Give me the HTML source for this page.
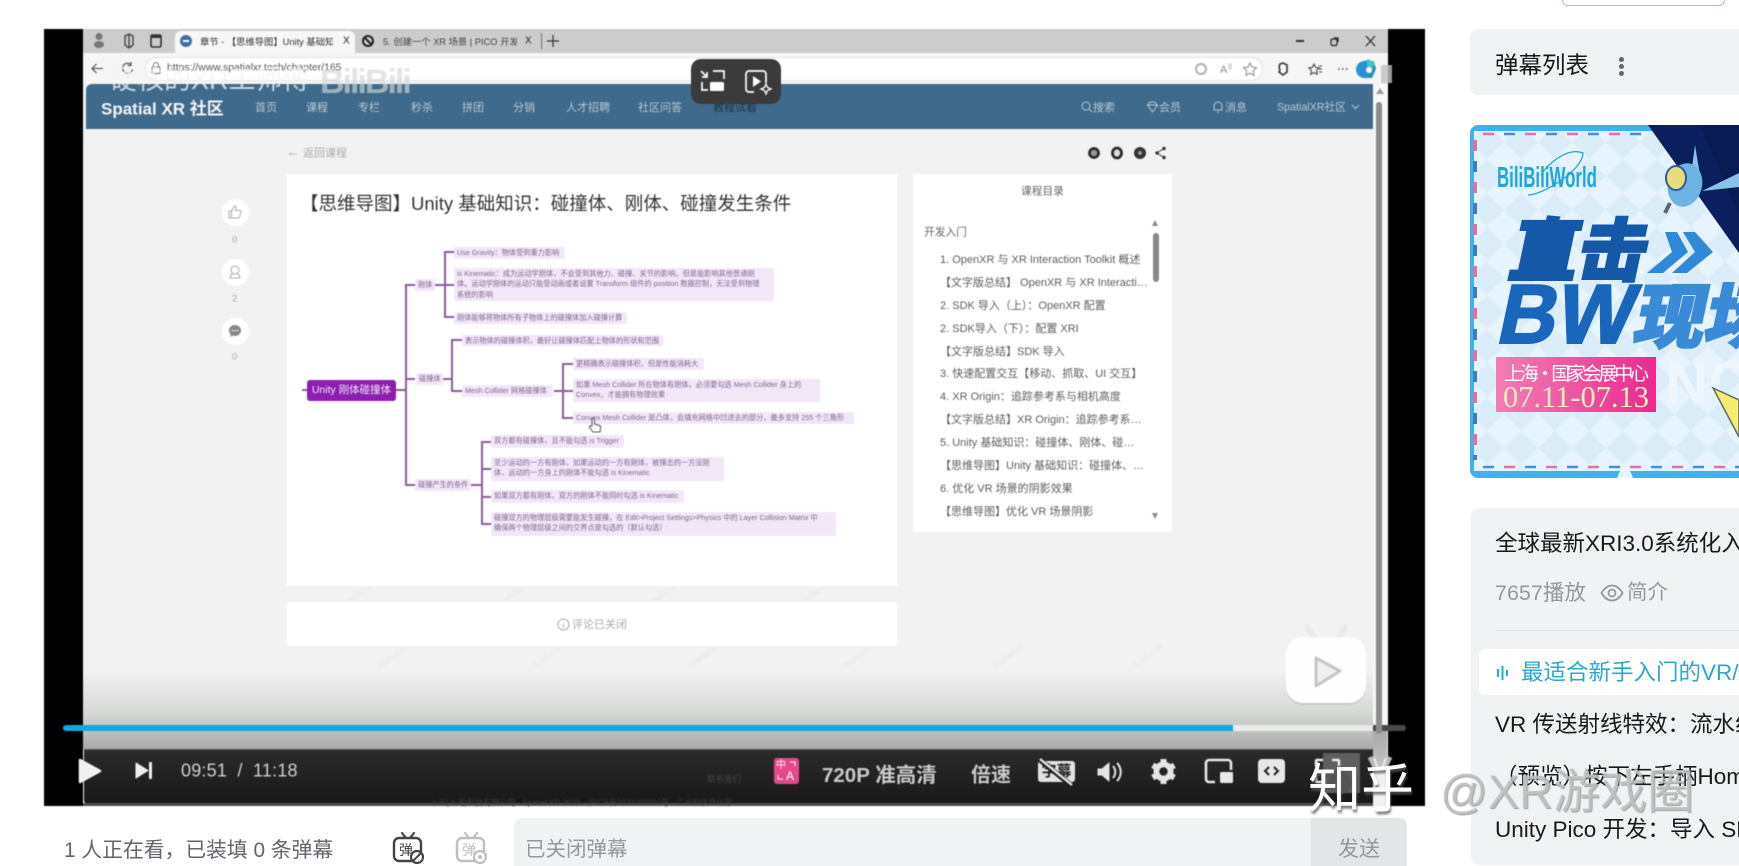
<!DOCTYPE html>
<html lang="zh">
<head>
<meta charset="utf-8">
<title>Spatial XR</title>
<style>
*{box-sizing:border-box}
html,body{margin:0;padding:0;background:#fff;overflow:hidden}
body{width:1739px;height:866px;position:relative;overflow:hidden;font-family:"Liberation Sans","Noto Sans CJK SC",sans-serif}
.a{position:absolute;white-space:nowrap}
.c{transform:translateY(-50%)}
#blur{position:absolute;left:0;top:0;width:1739px;height:866px;overflow:hidden;filter:blur(.45px)}
.nav{color:#b9c8d3;font-size:11px;top:107px;transform:translateY(-50%)}
.n{position:absolute;background:#f1e7f7;color:#84648f;font-size:7.2px;line-height:10.4px;padding:1px 3px;border-radius:2px;white-space:nowrap}
.l{position:absolute;background:#8d5c99}
.toc{position:absolute;left:940px;width:208px;color:#5d5d5d;font-size:11px;line-height:14px;white-space:nowrap;overflow:hidden;text-overflow:ellipsis;transform:translateY(-50%)}
.ri{position:absolute;color:#18191c;font-size:22.5px;line-height:32px;white-space:nowrap;overflow:hidden;transform:translateY(-50%)}
.wm{position:absolute;color:#e8e9e8;font-size:8px;transform:rotate(-35deg);white-space:nowrap}
</style>
</head>
<body>
<div id="blur">
<!-- player -->
<div class="a" style="left:44px;top:29px;width:1381px;height:777px;background:#000"></div>
<div class="a" style="left:83px;top:29px;width:1305px;height:777px;background:#f1f2f1"></div>

<!-- tab bar -->
<div class="a" style="left:83px;top:29px;width:1305px;height:24px;background:#cbcccb"></div>
<div class="a" style="left:175px;top:31px;width:180px;height:24px;background:#f6f7f6;border-radius:6px 6px 0 0"></div>
<svg class="a" style="left:90px;top:31px" width="80" height="20" viewBox="0 0 80 20">
<circle cx="9" cy="5.5" r="3.5" fill="#777"/><ellipse cx="9" cy="13.5" rx="5" ry="3.5" fill="#777"/>
<path d="M35 5l4-2 4 2v9l-4 3-4-3z M39 3v14" fill="none" stroke="#444" stroke-width="1.4"/>
<rect x="61" y="4" width="10" height="12" rx="1.5" fill="none" stroke="#333" stroke-width="1.6"/><rect x="61" y="4" width="10" height="3" fill="#333"/>
</svg>
<div class="a" style="left:180px;top:35px;width:12px;height:12px;border-radius:50%;background:#3d6fa8"></div>
<div class="a" style="left:183px;top:40px;width:6px;height:1.5px;background:#fff"></div>
<div class="a c" style="left:200px;top:41px;font-size:9.3px;color:#333;width:133px;overflow:hidden">章节 - 【思维导图】Unity 基础知识</div>
<div class="a c" style="left:343px;top:41px;font-size:10px;color:#222">X</div>
<svg class="a" style="left:361px;top:34px" width="14" height="14" viewBox="0 0 14 14"><circle cx="7" cy="7" r="5" fill="none" stroke="#222" stroke-width="2"/><path d="M3.5 3.5l7 7" stroke="#222" stroke-width="2"/></svg>
<div class="a c" style="left:383px;top:41px;font-size:9.3px;color:#444;width:134px;overflow:hidden">5. 创建一个 XR 场景 | PICO 开发者</div>
<div class="a c" style="left:525px;top:41px;font-size:10px;color:#222">X</div>
<div class="a" style="left:541px;top:33px;width:1px;height:16px;background:#777"></div>
<svg class="a" style="left:547px;top:35px" width="12" height="12"><path d="M6 0v12M0 6h12" stroke="#333" stroke-width="1.2"/></svg>
<div class="a" style="left:1296px;top:40px;width:8px;height:1.6px;background:#333"></div>
<svg class="a" style="left:1329px;top:35px" width="12" height="12" viewBox="0 0 12 12"><rect x="2" y="4" width="6" height="6.5" rx="1.5" fill="none" stroke="#222" stroke-width="1.2"/><path d="M5 3h4v4" fill="none" stroke="#222" stroke-width="1.2"/></svg>
<svg class="a" style="left:1365px;top:35px" width="11" height="12"><path d="M1 1l9 10M10 1L1 11" stroke="#222" stroke-width="1.1"/></svg>

<!-- address row -->
<div class="a" style="left:83px;top:53px;width:1305px;height:31px;background:#f5f6f5"></div>
<div class="a" style="left:145px;top:57px;width:1118px;height:24px;background:#fff;border:1px solid #e2e3e2;border-radius:12px"></div>
<svg class="a" style="left:90px;top:61px" width="50" height="15" viewBox="0 0 50 15">
<path d="M13 7.5H2M6.5 3L2 7.5 6.5 12" fill="none" stroke="#444" stroke-width="1.1"/>
<path d="M41 3.500a5 5 0 1 0 1.500 5M41 1v3.500h-3.500" fill="none" stroke="#555" stroke-width="1.2"/>
</svg>
<svg class="a" style="left:150px;top:61px" width="12" height="14" viewBox="0 0 12 14"><rect x="2" y="6" width="8" height="6.5" rx="1" fill="none" stroke="#777"/><path d="M3.500 6V4a2.500 2.500 0 0 1 5 0v2" fill="none" stroke="#777"/></svg>
<div class="a c" style="left:167px;top:68px;font-size:10.4px;color:#555">https://www.spatialxr.tech/chapter/165</div>
<svg class="a" style="left:1192px;top:56px" width="192" height="26" viewBox="0 0 192 26">
<circle cx="9" cy="13" r="5" fill="none" stroke="#b5b5b5" stroke-width="2.200"/>
<text x="28" y="17" font-size="11" fill="#888" font-family="Liberation Sans">A</text><text x="36" y="12" font-size="6" fill="#888" font-family="Liberation Sans">))</text>
<path d="M58 7l2 4 4.500.6-3.200 3.200.8 4.600-4.100-2.200-4.100 2.200.8-4.600-3.200-3.200 4.500-.6z" fill="none" stroke="#888"/>
<path d="M91 7l4 2v7l-4 3-4-3 1-2-1-3 1-3z" fill="none" stroke="#333" stroke-width="1.600"/>
<path d="M122 8l1.600 3.400 3.600.5-2.600 2.600.6 3.800-3.200-1.800-3.200 1.800.6-3.800-2.600-2.600 3.600-.5z M127 10h3M127 13h3M127 16h3" fill="none" stroke="#444" stroke-width="1.100"/>
<path d="M146 13h1.600M150 13h1.600M154 13h1.600" stroke="#555" stroke-width="1.400"/>
<path d="M172 5a9 9 0 0 1 12 8l-4 9h-7a8 8 0 0 1-1-17z" fill="#2b8fd6"/><path d="M175 3l8 3-3 7-5-2z" fill="#3fc6c4"/><circle cx="177" cy="14" r="3" fill="#fff"/>
</svg>
<div class="a" style="left:1381px;top:65px;width:11px;height:18px;background:#bfc0bf;opacity:.8"></div>

<!-- site header -->
<div class="a" style="left:86px;top:84px;width:1287px;height:45px;background:#3f6a8b;border-radius:6px 0 0 0"></div>
<div class="a" style="left:110px;top:64px;font-size:27px;line-height:32px;color:#f4f6f6;opacity:.78">硬核的XR工师傅</div>
<div class="a" style="left:320px;top:63px;font-size:34px;line-height:38px;font-weight:bold;color:#d3d7d8;opacity:.65;letter-spacing:-2px">BiliBili</div>
<div class="a c" style="left:101px;top:107px;font-size:17px;font-weight:bold;color:#f2f5f6">Spatial XR 社区</div>
<div class="a nav" style="left:255px">首页</div>
<div class="a nav" style="left:306px">课程</div>
<div class="a nav" style="left:358px">专栏</div>
<div class="a nav" style="left:411px">秒杀</div>
<div class="a nav" style="left:462px">拼团</div>
<div class="a nav" style="left:513px">分销</div>
<div class="a nav" style="left:566px">人才招聘</div>
<div class="a nav" style="left:638px">社区问答</div>
<div class="a nav" style="left:713px;color:#1f3442">教程试看</div>
<svg class="a" style="left:1080px;top:100px" width="14" height="14"><circle cx="6" cy="6" r="4" fill="none" stroke="#b9c8d3"/><path d="M9 9l3 3" stroke="#b9c8d3"/></svg>
<div class="a nav" style="left:1093px">搜索</div>
<svg class="a" style="left:1146px;top:100px" width="13" height="14"><path d="M1.500 5l3-3h4l3 3-5 7z M1.500 5h10" fill="none" stroke="#b9c8d3"/></svg>
<div class="a nav" style="left:1159px">会员</div>
<svg class="a" style="left:1212px;top:100px" width="12" height="14"><path d="M2 10V6a4 4 0 0 1 8 0v4zM5 12h2" fill="none" stroke="#b9c8d3"/></svg>
<div class="a nav" style="left:1225px">消息</div>
<div class="a nav" style="left:1277px;font-size:10.7px">SpatialXR社区</div>
<svg class="a" style="left:1351px;top:104px" width="9" height="6"><path d="M1 1l3.500 3.500L8 1" fill="none" stroke="#b9c8d3"/></svg>

<!-- overlay pill -->
<div class="a" style="left:691px;top:59px;width:90px;height:45px;background:#3a3a3a;border-radius:10px"></div>
<svg class="a" style="left:691px;top:59px" width="90" height="45" viewBox="0 0 90 45">
<path d="M10 12l6 6M16 13v5h-5M22 12h11v8M11 23v8h6" fill="none" stroke="#fff" stroke-width="1.700"/>
<rect x="19" y="23" width="14" height="9" rx="1.500" fill="#fff"/>
<path d="M63 33h-5a3 3 0 0 1-3-3V15a3 3 0 0 1 3-3h14a3 3 0 0 1 3 3v9" fill="none" stroke="#fff" stroke-width="1.700"/>
<path d="M62 17l8 5.500-8 5.500z" fill="#fff"/>
<path d="M75 25l1.500 3.500L80 30l-3.500 1.500L75 35l-1.500-3.500L70 30l3.500-1.500z" fill="none" stroke="#fff" stroke-width="1.300"/>
</svg>

<!-- page scrollbar -->
<div class="a" style="left:1373px;top:84px;width:15px;height:647px;background:#f7f8f7"></div>
<div class="a" style="left:1376px;top:88px;width:0;height:0;border-left:4px solid transparent;border-right:4px solid transparent;border-bottom:6px solid #999"></div>
<div class="a" style="left:1376px;top:102px;width:6px;height:630px;background:#8c8d8c;border-radius:3px"></div>

<!-- back + share -->
<div class="a c" style="left:286px;top:152px;font-size:11px;color:#aaa"><span style="font-size:14px">←</span> 返回课程</div>
<svg class="a" style="left:1085px;top:145px" width="85" height="16" viewBox="0 0 85 16">
<circle cx="9" cy="8" r="4.500" fill="#999" stroke="#2b2b2b" stroke-width="2.800"/>
<ellipse cx="32" cy="8" rx="4.500" ry="5" fill="#ddd" stroke="#2b2b2b" stroke-width="2.800"/>
<circle cx="55" cy="8" r="6" fill="#333"/><circle cx="55" cy="8" r="2" fill="#999"/>
<circle cx="72" cy="8" r="1.700" fill="#333"/><circle cx="79" cy="3.500" r="1.700" fill="#333"/><circle cx="79" cy="12.500" r="1.700" fill="#333"/><path d="M72 8l7-4.500M72 8l7 4.500" stroke="#333"/>
</svg>

<!-- faint watermarks -->
<div class="wm" style="left:340px;top:590px">SpatialXR</div>
<div class="wm" style="left:495px;top:590px">SpatialXR</div>
<div class="wm" style="left:645px;top:590px">SpatialXR</div>
<div class="wm" style="left:795px;top:590px">SpatialXR</div>
<div class="wm" style="left:375px;top:652px">SpatialXR</div>
<div class="wm" style="left:530px;top:652px">SpatialXR</div>
<div class="wm" style="left:685px;top:652px">SpatialXR</div>
<div class="wm" style="left:840px;top:652px">SpatialXR</div>
<div class="wm" style="left:990px;top:652px">SpatialXR</div>
<div class="wm" style="left:1130px;top:652px">SpatialXR</div>

<!-- left action rail -->
<div class="a" style="left:221.500px;top:198.500px;width:27px;height:27px;border-radius:50%;background:#fff"></div>
<svg class="a" style="left:228px;top:205px" width="14" height="14" viewBox="0 0 14 14"><path d="M1 6h2.500v7H1zM3.500 6l3-5c1.500 0 2 1 1.500 2.200L7.500 5.500H12c1 0 1.300.8 1 1.600l-1.500 5c-.2.6-.7.9-1.300.9H3.500" fill="none" stroke="#aaa"/></svg>
<div class="a c" style="left:232px;top:240px;font-size:9.500px;color:#aaa">0</div>
<div class="a" style="left:221.500px;top:258.500px;width:27px;height:27px;border-radius:50%;background:#fff"></div>
<svg class="a" style="left:228px;top:265px" width="14" height="14" viewBox="0 0 14 14"><circle cx="7" cy="5" r="4" fill="none" stroke="#aaa"/><path d="M2 13c0-3 2-4 3-4.500M12 13c0-3-2-4-3-4.500M2 13h10" fill="none" stroke="#aaa"/></svg>
<div class="a c" style="left:232px;top:299px;font-size:9.500px;color:#aaa">2</div>
<div class="a" style="left:221.500px;top:317.500px;width:27px;height:27px;border-radius:50%;background:#fff"></div>
<svg class="a" style="left:228px;top:324px" width="14" height="14" viewBox="0 0 14 14"><ellipse cx="7" cy="6.500" rx="6" ry="5.500" fill="#888"/><path d="M3 10l-1 3 4-2z" fill="#888"/><circle cx="4.500" cy="6.500" r=".8" fill="#fff"/><circle cx="7" cy="6.500" r=".8" fill="#fff"/><circle cx="9.500" cy="6.500" r=".8" fill="#fff"/></svg>
<div class="a c" style="left:232px;top:357px;font-size:9.500px;color:#aaa">0</div>

<!-- content card -->
<div class="a" style="left:287px;top:174px;width:610px;height:412px;background:#fff"></div>
<div class="a c" style="left:300px;top:203px;font-size:18.500px;color:#333">【思维导图】Unity 基础知识：碰撞体、刚体、碰撞发生条件</div>

<!-- mind map lines -->
<div class="l" style="left:302px;top:389px;width:6px;height:2px"></div>
<div class="l" style="left:396px;top:389px;width:10px;height:2px"></div>
<div class="l" style="left:405px;top:285px;width:2px;height:200px"></div>
<div class="l" style="left:405px;top:284px;width:10px;height:2px"></div>
<div class="l" style="left:406px;top:378px;width:9px;height:2px"></div>
<div class="l" style="left:405px;top:484px;width:10px;height:2px"></div>
<div class="l" style="left:435px;top:284px;width:10px;height:2px"></div>
<div class="l" style="left:444px;top:252px;width:2px;height:65px"></div>
<div class="l" style="left:444px;top:251px;width:10px;height:2px"></div>
<div class="l" style="left:445px;top:284px;width:9px;height:2px"></div>
<div class="l" style="left:444px;top:316px;width:10px;height:2px"></div>
<div class="l" style="left:443px;top:378px;width:9px;height:2px"></div>
<div class="l" style="left:451px;top:340px;width:2px;height:51px"></div>
<div class="l" style="left:451px;top:339px;width:11px;height:2px"></div>
<div class="l" style="left:451px;top:390px;width:11px;height:2px"></div>
<div class="l" style="left:554px;top:390px;width:9px;height:2px"></div>
<div class="l" style="left:562px;top:364px;width:2px;height:53px"></div>
<div class="l" style="left:562px;top:363px;width:11px;height:2px"></div>
<div class="l" style="left:563px;top:390px;width:10px;height:2px"></div>
<div class="l" style="left:562px;top:417px;width:11px;height:2px"></div>
<div class="l" style="left:471px;top:484px;width:10px;height:2px"></div>
<div class="l" style="left:481px;top:442px;width:2px;height:82px"></div>
<div class="l" style="left:481px;top:441px;width:10px;height:2px"></div>
<div class="l" style="left:482px;top:468px;width:9px;height:2px"></div>
<div class="l" style="left:482px;top:496px;width:9px;height:2px"></div>
<div class="l" style="left:481px;top:523px;width:10px;height:2px"></div>

<!-- mind map nodes -->
<div class="a" style="left:307px;top:380px;width:89px;height:21px;background:#8c1fb0;border-radius:3px;color:#f4e6f8;font-size:10.500px;line-height:21px;text-align:center">Unity 刚体碰撞体</div>
<div class="n" style="left:415px;top:279px;width:20px;height:12px;padding:1px 3px">刚体</div>
<div class="n" style="left:416px;top:373px;width:27px;height:12px;padding:1px 3px">碰撞体</div>
<div class="n" style="left:415px;top:479px;width:56px;height:12px;padding:1px 3px">碰撞产生的条件</div>
<div class="n" style="left:454px;top:247px;width:111px;height:12px">Use Gravity：物体受到重力影响</div>
<div class="n" style="left:454px;top:268px;width:320px;height:33px">is Kinematic：成为运动学刚体，不会受到其他力、碰撞、关节的影响，但是能影响其他普通刚<br>体。运动学刚体的运动只能受动画或者设置 Transform 组件的 position 数据控制，无法受到物理<br>系统的影响</div>
<div class="n" style="left:454px;top:312px;width:173px;height:12px">刚体能够将物体所有子物体上的碰撞体加入碰撞计算</div>
<div class="n" style="left:462px;top:335px;width:201px;height:11px;line-height:9px">表示物体的碰撞体积，最好让碰撞体匹配上物体的形状和范围</div>
<div class="n" style="left:462px;top:385px;width:91px;height:12px">Mesh Collider 网格碰撞体</div>
<div class="n" style="left:573px;top:358px;width:131px;height:12px">更精确表示碰撞体积，但是性能消耗大</div>
<div class="n" style="left:573px;top:379px;width:247px;height:23px">如果 Mesh Collider 所在物体有刚体，必须要勾选 Mesh Collider 身上的<br>Convex，才能拥有物理效果</div>
<div class="n" style="left:573px;top:412px;width:281px;height:12px">Convex Mesh Collider 是凸体，会填充网格中凹进去的部分，最多支持 255 个三角形</div>
<div class="n" style="left:491px;top:435px;width:133px;height:13px">双方都有碰撞体，且不能勾选 is Trigger</div>
<div class="n" style="left:491px;top:457px;width:233px;height:24px">至少运动的一方有刚体，如果运动的一方有刚体，被撞击的一方没刚<br>体，运动的一方身上的刚体不能勾选 is Kinematic</div>
<div class="n" style="left:491px;top:490px;width:193px;height:13px">如果双方都有刚体，双方的刚体不能同时勾选 is Kinematic</div>
<div class="n" style="left:491px;top:512px;width:345px;height:24px">碰撞双方的物理层级需要能发生碰撞，在 Edit&gt;Project Settings&gt;Physics 中的 Layer Collision Matrix 中<br>确保两个物理层级之间的交界点是勾选的（默认勾选）</div>
<!-- cursor -->
<svg class="a" style="left:588px;top:417px" width="14" height="18" viewBox="0 0 14 18"><path d="M4 9V2.500a1.200 1.200 0 0 1 2.400 0V7l5 1.500c1 .3 1.500 1 1.300 2L12 15H5L1.500 10.500c-.8-1 .8-2.300 1.600-1.300z" fill="#fff" stroke="#555"/></svg>

<!-- comments closed -->
<div class="a" style="left:287px;top:602px;width:610px;height:44px;background:#fff"></div>
<svg class="a" style="left:557px;top:618px" width="13" height="13"><circle cx="6.500" cy="6.500" r="5.500" fill="none" stroke="#aaa"/><path d="M6.500 3.500v1M6.500 6v4" stroke="#aaa"/></svg>
<div class="a c" style="left:572px;top:624px;font-size:11px;color:#aaa">评论已关闭</div>

<!-- TOC -->
<div class="a" style="left:913px;top:174px;width:259px;height:358px;background:#fff"></div>
<div class="a c" style="left:1021px;top:191px;font-size:10.700px;color:#666">课程目录</div>
<div class="a c" style="left:924px;top:232px;font-size:10.700px;color:#666">开发入门</div>
<div class="toc" style="top:260px">1. OpenXR 与 XR Interaction Toolkit 概述</div>
<div class="toc" style="top:283px">【文字版总结】 OpenXR 与 XR Interaction Toolkit</div>
<div class="toc" style="top:306px">2. SDK 导入（上）：OpenXR 配置</div>
<div class="toc" style="top:329px">2. SDK导入（下）：配置 XRI</div>
<div class="toc" style="top:352px">【文字版总结】SDK 导入</div>
<div class="toc" style="top:374px">3. 快速配置交互【移动、抓取、UI 交互】</div>
<div class="toc" style="top:397px">4. XR Origin：追踪参考系与相机高度</div>
<div class="toc" style="top:420px">【文字版总结】XR Origin：追踪参考系与相机高度</div>
<div class="toc" style="top:443px;width:201px">5. Unity 基础知识：碰撞体、刚体、碰撞发生条件</div>
<div class="toc" style="top:466px">【思维导图】Unity 基础知识：碰撞体、刚体、碰撞</div>
<div class="toc" style="top:489px">6. 优化 VR 场景的阴影效果</div>
<div class="toc" style="top:512px">【思维导图】优化 VR 场景阴影</div>
<div class="a" style="left:1152px;top:220px;width:0;height:0;border-left:3.500px solid transparent;border-right:3.500px solid transparent;border-bottom:6px solid #888"></div>
<div class="a" style="left:1153px;top:233px;width:5.500px;height:49px;background:#888;border-radius:3px"></div>
<div class="a" style="left:1152px;top:513px;width:0;height:0;border-left:3.500px solid transparent;border-right:3.500px solid transparent;border-top:6px solid #888"></div>

<!-- bottom gradient -->
<div class="a" style="left:83px;top:670px;width:1290px;height:79px;background:linear-gradient(to bottom,rgba(170,172,170,0),rgba(205,207,205,.75) 55%,#a8a9a8)"></div>
<!-- dark footer bar -->
<div class="a" style="left:84px;top:749px;width:1289px;height:55px;background:linear-gradient(#2b2b2b,#181818);border-top:1px solid #555;border-radius:0 0 0 4px"></div>
<div class="a" style="left:83px;top:803px;width:1290px;height:3px;background:#4c4c4c"></div>
<div class="a c" style="left:707px;top:779px;font-size:8.500px;color:#444">联系我们</div>
<div class="a c" style="left:430px;top:803px;font-size:8px;color:#3e3e3e">上元(上海)科技有限公司 · Spatial XR 2023 · 沪ICP备2023000000号 · 工业和信息化部</div>
<div class="a" style="left:1373px;top:731px;width:14px;height:40px;background:linear-gradient(#a8a9a8,#c4c5c4)"></div>

<!-- tv logo -->
<svg class="a" style="left:1283px;top:623px;overflow:visible" width="86" height="84" viewBox="-2 -2 86 84">
<path d="M22 2l9 13M60 2L51 15" stroke="#e9eae9" stroke-width="6" stroke-linecap="round"/>
<rect x="1" y="12" width="80" height="66" rx="17" fill="#b8b9b8" opacity=".55" transform="translate(0 2)"/>
<rect x="1" y="12" width="80" height="66" rx="17" fill="#fefefe"/>
<path d="M31 33l24 13-24 15z" fill="#f0f0f0" stroke="#c4c5c4" stroke-width="3" stroke-linejoin="round"/>
</svg>

<!-- progress -->
<div class="a" style="left:1233px;top:725px;width:140px;height:6px;background:rgba(240,242,240,.85)"></div>
<div class="a" style="left:1373px;top:725px;width:33px;height:6px;background:#4a4a4a;border-radius:0 3px 3px 0"></div>
<div class="a" style="left:63px;top:725px;width:1170px;height:6px;background:#11a8e2;border-radius:3px 0 0 3px"></div>
<div class="a" style="left:1376px;top:700px;width:6px;height:34px;background:#8c8d8c;border-radius:3px"></div>

<!-- controls -->
<svg class="a" style="left:78px;top:757px" width="24" height="28" viewBox="0 0 24 28"><path d="M2 3l20 11L2 25z" fill="#f1f1f1" stroke="#f1f1f1" stroke-width="2.500" stroke-linejoin="round"/></svg>
<svg class="a" style="left:134px;top:761px" width="20" height="19" viewBox="0 0 20 19"><path d="M2 2l12 7.500L2 17z" fill="#eee" stroke="#eee" stroke-linejoin="round"/><rect x="15" y="1" width="3" height="17" rx="1" fill="#eee"/></svg>
<div class="a c" style="left:181px;top:771px;font-size:18px;color:#cfcfcf;letter-spacing:.2px">09:51&nbsp;&nbsp;/&nbsp;&nbsp;11:18</div>
<div class="a" style="left:774px;top:758px;width:25px;height:26px;background:#e6488c;border-radius:3px"></div>
<div class="a" style="left:776px;top:760px;font-size:10px;line-height:11px;color:#fff">中</div>
<div class="a" style="left:786px;top:770px;font-size:12px;line-height:13px;color:#fff">A</div>
<svg class="a" style="left:774px;top:758px" width="25" height="26"><path d="M16 4h5v4M4 17v4h5" fill="none" stroke="#fff"/></svg>
<div class="a c" style="left:822px;top:773px;font-size:20.500px;font-weight:bold;color:#c9c9c9">720P 准高清</div>
<div class="a c" style="left:971px;top:773px;font-size:20px;font-weight:bold;color:#c9c9c9">倍速</div>
<div class="a" style="left:1038px;top:761px;width:37px;height:21px;background:#e2e2e2;border-radius:3px;color:#222;font-size:15px;line-height:21px;text-align:center;font-weight:bold">字幕</div>
<svg class="a" style="left:1036px;top:756px" width="42" height="32"><path d="M4 4l32 26" stroke="#1e1e1e" stroke-width="5"/><path d="M4 3l32 26" stroke="#e8e8e8" stroke-width="2.400"/></svg>
<svg class="a" style="left:1096px;top:760px" width="28" height="24" viewBox="0 0 28 24"><path d="M2 9h4l7-6v18l-7-6H2z" fill="#e4e4e4" stroke="#e4e4e4" stroke-linejoin="round"/><path d="M17 6c3 3.500 3 8.500 0 12M21 3c5 5 5 13 0 18" fill="none" stroke="#e4e4e4" stroke-width="2"/></svg>
<svg class="a" style="left:1150px;top:758px" width="27" height="27" viewBox="0 0 27 27"><circle cx="13.500" cy="13.500" r="10" fill="#e4e4e4"/><path d="M13.500 1v5M13.500 21v5M2.700 7.300l4.300 2.500M20 17.200l4.300 2.500M2.700 19.700l4.300-2.500M20 9.800l4.300-2.500" stroke="#e4e4e4" stroke-width="6"/><circle cx="13.500" cy="13.500" r="4.200" fill="#222"/></svg>
<svg class="a" style="left:1204px;top:758px" width="30" height="27" viewBox="0 0 30 27"><path d="M11 24H5a3 3 0 0 1-3-3V5a3 3 0 0 1 3-3h19a3 3 0 0 1 3 3v7" fill="none" stroke="#e8e8e8" stroke-width="2.600"/><rect x="16" y="14" width="13" height="11" rx="1.500" fill="#e8e8e8"/></svg>
<div class="a" style="left:1258px;top:759px;width:27px;height:24px;background:#e8e8e8;border-radius:4px"></div>
<svg class="a" style="left:1258px;top:759px" width="27" height="24"><path d="M11 8l-4 4 4 4M16 8l4 4-4 4" fill="none" stroke="#222" stroke-width="2"/></svg>
<div class="a" style="left:1323px;top:753px;width:37px;height:40px;background:#5f5f5f"></div>
<svg class="a" style="left:1314px;top:758px" width="27" height="26" fill="none" stroke="#ececec" stroke-width="2.500"><path d="M2 8V3a1 1 0 0 1 1-1h6M18 2h6a1 1 0 0 1 1 1v5M25 18v5a1 1 0 0 1-1 1h-6M9 24H3a1 1 0 0 1-1-1v-5"/></svg>
<svg class="a" style="left:1364px;top:755px" width="32" height="32" viewBox="0 0 32 32"><path d="M6 2l7 14M26 2l-7 14" stroke="#b8b8b8" stroke-width="5"/><path d="M10 3l4 11M22 3l-4 11" stroke="#e8e8e8" stroke-width="2.500"/></svg>
<div class="a" style="left:1328px;top:770px;width:24px;height:24px;border-radius:50%;background:#555"></div>
</div>

<!-- below player -->
<div class="a c" style="left:64px;top:848px;font-size:20.800px;color:#61666d">1 人正在看，已装填 0 条弹幕</div>
<svg class="a" style="left:392px;top:831px" width="32" height="33" viewBox="0 0 32 33">
<path d="M10 2l4 5M22 2l-4 5" stroke="#444" stroke-width="2.200" stroke-linecap="round"/>
<rect x="2" y="7" width="27" height="23" rx="5" fill="none" stroke="#444" stroke-width="2.400"/>
<text x="7" y="24" font-size="14" fill="#444" font-family="Noto Sans CJK SC">弹</text>
<circle cx="25" cy="26" r="6" fill="#fff" stroke="#444" stroke-width="2.200"/><path d="M21 30l8-8" stroke="#444" stroke-width="2"/>
</svg>
<svg class="a" style="left:455px;top:831px" width="32" height="33" viewBox="0 0 32 33">
<path d="M10 2l4 5M22 2l-4 5" stroke="#bfbfbf" stroke-width="2.200" stroke-linecap="round"/>
<rect x="2" y="7" width="27" height="23" rx="5" fill="none" stroke="#bfbfbf" stroke-width="2.400"/>
<text x="7" y="24" font-size="14" fill="#bfbfbf" font-family="Noto Sans CJK SC">弹</text>
<circle cx="25" cy="26" r="6" fill="#fff" stroke="#bfbfbf" stroke-width="2.200"/><circle cx="25" cy="26" r="2" fill="#bfbfbf"/>
</svg>
<div class="a" style="left:514px;top:818px;width:797px;height:48px;background:#f1f2f3;border-radius:8px 0 0 0"></div>
<div class="a c" style="left:525px;top:847px;font-size:20.500px;color:#9499a0">已关闭弹幕</div>
<div class="a" style="left:1311px;top:818px;width:96px;height:48px;background:#e3e5e7;border-radius:0 8px 0 0"></div>
<div class="a c" style="left:1338px;top:848px;font-size:21px;color:#9499a0">发送</div>

<!-- top right button -->
<div class="a" style="left:1562px;top:0;width:163px;height:6px;border:1px solid #e4a3b6;border-top:none;border-radius:0 0 7px 7px"></div>

<!-- right column -->
<div class="a" style="left:1470px;top:29px;width:269px;height:66px;background:#f1f2f3;border-radius:8px 0 0 8px"></div>
<div class="a c" style="left:1495px;top:63px;font-size:23.500px;color:#18191c">弹幕列表</div>
<div class="a" style="left:1618.500px;top:56.500px;width:5px;height:5px;border-radius:50%;background:#61666d"></div>
<div class="a" style="left:1618.500px;top:63.500px;width:5px;height:5px;border-radius:50%;background:#61666d"></div>
<div class="a" style="left:1618.500px;top:71px;width:5px;height:5px;border-radius:50%;background:#61666d"></div>

<!-- banner -->
<svg class="a" style="left:1470px;top:125px" width="269" height="353" viewBox="0 0 269 353">
<defs>
<pattern id="dm" width="34" height="34" patternUnits="userSpaceOnUse"><rect width="34" height="34" fill="#e7f4fd"/><path d="M17 0l17 17-17 17L0 17z" fill="#dcedfa"/></pattern>
<linearGradient id="pk" x1="0" x2="1"><stop offset="0" stop-color="#f27db4"/><stop offset="1" stop-color="#ea2a8e"/></linearGradient>
<clipPath id="bc"><path d="M8 0H269V353H8a8 8 0 0 1-8-8V8a8 8 0 0 1 8-8z"/></clipPath>
</defs>
<g clip-path="url(#bc)">
<rect width="269" height="353" fill="#3db2ee"/>
<rect x="4" y="6" width="265" height="340" fill="url(#dm)"/>
<path d="M178 0H269V128z" fill="#0b1f5f"/>
<path d="M230 0H269V90z" fill="#0a1a52"/>
<path d="M13 9H178" stroke="#e2719c" stroke-width="2.500" stroke-dasharray="11 31"/>
<path d="M34 9H178" stroke="#4590d4" stroke-width="2.500" stroke-dasharray="11 31"/>
<path d="M13 342H269" stroke="#4590d4" stroke-width="2.500" stroke-dasharray="11 31"/>
<path d="M34 342H269" stroke="#e2719c" stroke-width="2.500" stroke-dasharray="11 31"/>
<path d="M5 15V335" stroke="#e2719c" stroke-width="4" stroke-dasharray="11 31"/>
<path d="M5 36V335" stroke="#3d7cc4" stroke-width="4" stroke-dasharray="11 31"/>
<path d="M155 338c3 5 6 9 8 15h-16c2-6 5-10 8-15z" fill="#e7f4fd"/>
<!-- logo -->
<text x="27" y="62" font-size="29" font-weight="bold" fill="#1ea7d8" font-family="Liberation Sans" textLength="100" lengthAdjust="spacingAndGlyphs">BiliBiliWorld</text>
<path d="M58 70c15 0 55-25 55-42-15-6-35 10-42 22" fill="none" stroke="#1ea7d8" stroke-width="1.300"/>
<!-- astro ship -->
<path d="M221 50l4-30 5 30z" fill="#8bc2ea"/>
<path d="M232 66l37-18v14z" fill="#8bc2ea"/>
<path d="M200 78l-5 10" stroke="#5b6670" stroke-width="4"/>
<ellipse cx="215" cy="60" rx="17" ry="22" fill="#6eb2e4" transform="rotate(15 215 60)"/>
<ellipse cx="206" cy="53" rx="10" ry="12" fill="#e8dc7c" stroke="#2e5d95" stroke-width="2"/>
<!-- faint NO -->
<text x="195" y="278" font-size="60" fill="#edf6fd" font-weight="bold" font-family="Liberation Sans">NO</text>
<!-- headline -->
<g transform="skewX(-12)" font-family="Noto Sans CJK SC" font-weight="900">
<text x="69" y="150" font-size="68" fill="#1658a8" stroke="#1658a8" stroke-width="2.500" textLength="136" lengthAdjust="spacingAndGlyphs">直击</text>
<text x="71" y="218" font-size="84" fill="#1a66bd" stroke="#1a66bd" stroke-width="2" font-family="Liberation Sans" font-weight="bold" textLength="135" lengthAdjust="spacingAndGlyphs">BW</text>
<text x="208" y="217" font-size="70" fill="#3a8ad8" stroke="#3a8ad8" stroke-width="2.500">现场</text>
</g>
<!-- chevrons -->
<path d="M195 107h12l11 20-25 21h-16l25-21z" fill="#2f88d8"/>
<path d="M213 107h12l18 20-26 21h-15l23-21z" fill="#2f88d8"/>
<!-- pink box -->
<rect x="26" y="232" width="160" height="55" fill="url(#pk)"/>
<text x="34" y="255" font-size="19" fill="#fff" font-family="Noto Sans CJK SC" textLength="145">上海·国家会展中心</text>
<text x="33" y="282" font-size="31" fill="#fdf0c0" font-family="Liberation Serif" textLength="146" lengthAdjust="spacingAndGlyphs">07.11-07.13</text>
<!-- plane -->
<path d="M243 263l26 12V312z" fill="#f4ec6a" stroke="#5d6a72" stroke-width="1.500"/>
</g>
</svg>

<!-- info panel -->
<div class="a" style="left:1471px;top:508px;width:268px;height:357px;background:#f1f2f3;border-radius:8px 0 0 8px"></div>
<div class="ri" style="left:1495px;top:544px;width:244px">全球最新XRI3.0系统化入门教程</div>
<div class="ri" style="left:1495px;top:593px;color:#9499a0;font-size:21.500px">7657播放</div>
<svg class="a" style="left:1600px;top:584px" width="24" height="18" viewBox="0 0 24 18"><path d="M1.500 9C5 3 9 1.500 12 1.500S19 3 22.500 9C19 15 15 16.500 12 16.500S5 15 1.500 9z" fill="none" stroke="#9499a0" stroke-width="1.800"/><circle cx="12" cy="9" r="3.500" fill="none" stroke="#9499a0" stroke-width="1.800"/></svg>
<div class="ri" style="left:1627px;top:593px;color:#9499a0;font-size:20.500px">简介</div>
<div class="a" style="left:1495px;top:630px;width:244px;height:1px;background:#e3e5e7"></div>
<div class="a" style="left:1479px;top:649px;width:260px;height:46px;background:#fff;border-radius:6px 0 0 6px"></div>
<svg class="a" style="left:1496px;top:665px" width="16" height="16"><rect x="1" y="4" width="2" height="8" fill="#2ba6cf"/><rect x="5.500" y="1" width="2" height="14" fill="#2ba6cf"/><rect x="10" y="5" width="2" height="6" fill="#2ba6cf"/></svg>
<div class="ri" style="left:1521px;top:673px;width:218px;color:#2ba6cf">最适合新手入门的VR/AR开发教程</div>
<div class="ri" style="left:1495px;top:725px;width:244px">VR 传送射线特效：流水线效果</div>
<div class="ri" style="left:1495px;top:777px;width:244px">（预览）按下左手柄Home键</div>
<div class="ri" style="left:1495px;top:830px;width:244px">Unity Pico 开发：导入 SDK</div>

<!-- watermark -->
<div class="a" style="left:1440px;top:762px;font-size:47px;line-height:60px;color:rgba(195,197,197,.82);text-shadow:1px 1px 1px rgba(110,110,110,.6)">@XR游戏圈</div>
<div class="a" style="left:1308px;top:754px;font-size:53px;line-height:72px;color:#fff;text-shadow:1px 3px 2px rgba(90,90,90,.75)">知乎</div>
</body>
</html>
